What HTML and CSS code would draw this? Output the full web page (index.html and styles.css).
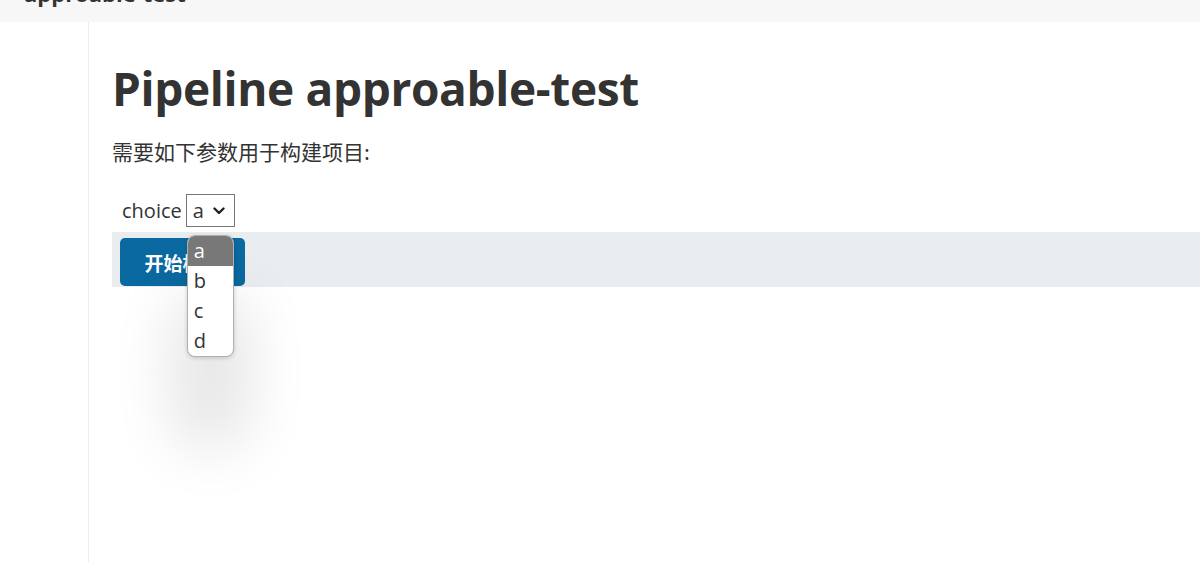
FILE: index.html
```html
<!DOCTYPE html>
<html lang="zh-CN">
<head>
<meta charset="utf-8">
<title>Pipeline approable-test</title>
<link rel="stylesheet" href="styles.css">
</head>
<body>
<header class="topbar">
  <div class="crumb">approable-test</div>
</header>
<div class="page">
  <aside class="sidebar"></aside>
  <main class="content">
    <h1 class="title">Pipeline approable-test</h1>
    <p class="intro">需要如下参数用于构建项目:</p>
    <div class="param-row">
      <span class="param-label">choice</span>
      <div class="select-wrap">
        <div class="select">
          <span class="select-value">a</span>
          <svg class="chevron" width="12" height="8" viewBox="0 0 12 8"><path d="M1.5 1.5 L6 6 L10.5 1.5" fill="none" stroke="#222" stroke-width="2.4" stroke-linecap="round" stroke-linejoin="round"/></svg>
        </div>
        <ul class="options">
          <li class="option active">a</li>
          <li class="option">b</li>
          <li class="option">c</li>
          <li class="option">d</li>
        </ul>
      </div>
    </div>
    <div class="actions">
      <button class="build-btn">开始构建</button>
    </div>
  </main>
</div>
</body>
</html>
```
FILE: styles.css
```css
html, body {
  margin: 0;
  padding: 0;
  background: #ffffff;
  font-family: "Open Sans", "Noto Sans CJK SC", sans-serif;
  color: #333333;
  height: 100%;
  overflow: hidden;
}

.topbar {
  height: 22px;
  background: #f7f7f7;
  overflow: hidden;
}

.crumb {
  margin-top: -18px;
  padding-left: 24px;
  font-size: 22px;
  line-height: 22px;
  font-weight: 700;
  color: #333;
}

.page {
  display: flex;
  height: 540px;
}

.sidebar {
  width: 88px;
  flex: none;
  border-right: 1px solid #eceff2;
}

.content {
  flex: 1;
  padding-left: 23px;
  padding-top: 38px;
}

.title {
  margin: 0;
  font-size: 46px;
  line-height: 56px;
  font-weight: 700;
  letter-spacing: -0.35px;
  color: #333;
}

.intro {
  margin: 20px 0 0 0;
  font-family: "Noto Sans CJK SC", sans-serif;
  font-size: 21px;
  line-height: 30px;
  color: #333;
}

.param-row {
  display: flex;
  align-items: center;
  margin-top: 28px;
  padding-left: 10px;
  height: 33px;
  font-size: 20px;
}

.param-label {
  margin-right: 4px;
}

.select-wrap {
  position: relative;
}

.select {
  box-sizing: border-box;
  width: 49px;
  height: 33px;
  border: 1px solid #767676;
  display: flex;
  align-items: center;
  padding-left: 6px;
  gap: 9px;
  background: #fff;
}

.select-value {
  font-size: 20px;
  line-height: 30px;
}

.chevron {
  display: block;
}

.options {
  position: absolute;
  left: 1px;
  top: 41px;
  width: 47px;
  box-sizing: border-box;
  margin: 0;
  padding: 0;
  list-style: none;
  background: #fff;
  border: 1px solid #b0b0b0;
  border-radius: 8px;
  overflow: hidden;
  z-index: 5;
  box-shadow: 0 75px 60px 15px rgba(0, 0, 0, 0.1), 0 1px 4px rgba(0,0,0,0.18);
}

.option {
  height: 30px;
  line-height: 30px;
  padding-left: 6px;
  font-size: 20px;
  color: #333;
}

.option.active {
  background: #787878;
  color: #fff;
}

.actions {
  margin-top: 5px;
  height: 55px;
  box-sizing: border-box;
  padding: 6px 8px 1px;
  background: #e9edf0;
}

.build-btn {
  width: 125px;
  height: 48px;
  border: none;
  border-radius: 5px;
  background: #0b69a1;
  color: #fff;
  font-family: "Noto Sans CJK SC", sans-serif;
  font-weight: 700;
  font-size: 19px;
  padding: 0;
  cursor: pointer;
}
```
